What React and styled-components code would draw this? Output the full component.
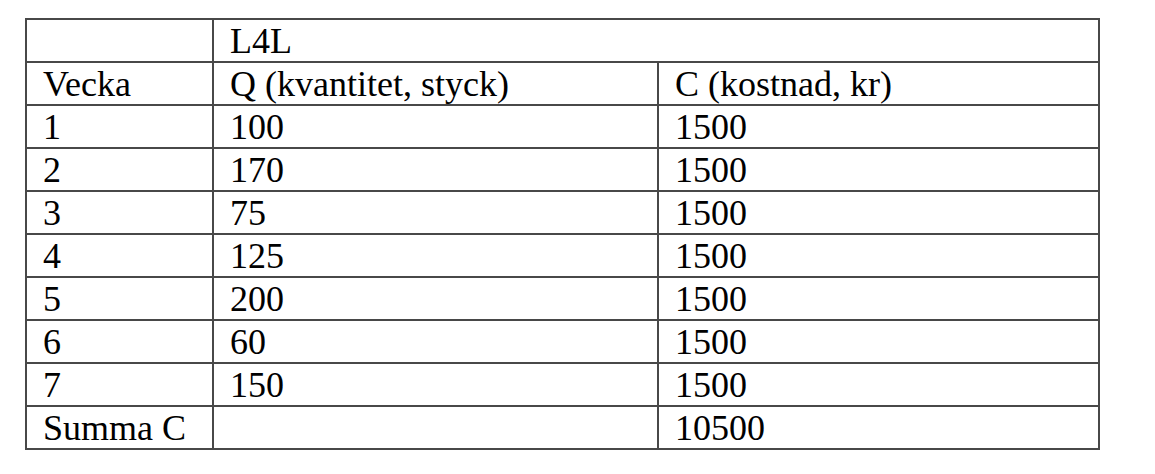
import React from 'react';
import styled, { createGlobalStyle } from 'styled-components';

const GlobalStyle = createGlobalStyle`
  html, body {
    margin: 0;
    padding: 0;
    background: #fff;
  }
`;

const Page = styled.div`
  padding: 18px 0 0 25px;
  font-family: 'Liberation Serif', 'Times New Roman', serif;
  color: #000;
`;

const Table = styled.table`
  border-collapse: collapse;
  table-layout: fixed;
  width: 1073px;
  font-size: 36px;
`;

const Col = styled.col`
  width: ${({ $w }) => $w}px;
`;

const Row = styled.tr`
  height: 43px;
`;

const Cell = styled.td`
  border: 2px solid #484848;
  padding: 1px 0 0 16px;
  line-height: 40px;
  vertical-align: top;
  white-space: nowrap;
`;

const rows = [
  ['1', '100', '1500'],
  ['2', '170', '1500'],
  ['3', '75', '1500'],
  ['4', '125', '1500'],
  ['5', '200', '1500'],
  ['6', '60', '1500'],
  ['7', '150', '1500'],
];

export default function App() {
  return (
    <>
      <GlobalStyle />
      <Page>
        <Table>
          <colgroup>
            <Col $w={187} />
            <Col $w={445} />
            <Col $w={441} />
          </colgroup>
          <tbody>
            <Row>
              <Cell />
              <Cell colSpan={2}>L4L</Cell>
            </Row>
            <Row>
              <Cell>Vecka</Cell>
              <Cell>Q (kvantitet, styck)</Cell>
              <Cell>C (kostnad, kr)</Cell>
            </Row>
            {rows.map(([week, q, c]) => (
              <Row key={week}>
                <Cell>{week}</Cell>
                <Cell>{q}</Cell>
                <Cell>{c}</Cell>
              </Row>
            ))}
            <Row>
              <Cell>Summa C</Cell>
              <Cell />
              <Cell>10500</Cell>
            </Row>
          </tbody>
        </Table>
      </Page>
    </>
  );
}
